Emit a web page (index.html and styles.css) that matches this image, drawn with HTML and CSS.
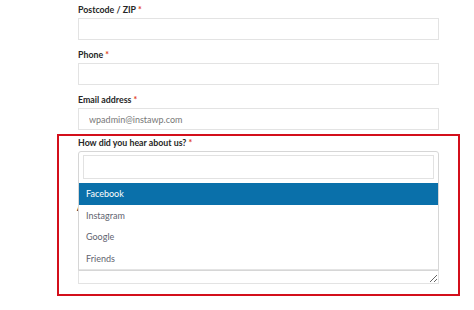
FILE: index.html
```html
<!DOCTYPE html>
<html lang="en">
<head>
    <meta charset="UTF-8">
    <meta name="viewport" content="width=device-width, initial-scale=1.0">
    <title>Checkout</title>
    <link rel="stylesheet" href="styles.css">
</head>
<body>
    <div class="form">
        <div class="field">
            <label>Postcode / ZIP <span class="req">*</span></label>
            <input type="text" class="input">
        </div>
        <div class="field">
            <label>Phone <span class="req">*</span></label>
            <input type="text" class="input">
        </div>
        <div class="field">
            <label>Email address <span class="req">*</span></label>
            <input type="text" class="input" value="wpadmin@instawp.com">
        </div>

        <div class="highlight">
            <label>How did you hear about us? <span class="req">*</span></label>
            <div class="select-wrap">
                <div class="selection"></div>
                <div class="dropdown">
                    <div class="search"><input type="text" class="search-input"></div>
                    <ul class="options">
                        <li class="active">Facebook</li>
                        <li>Instagram</li>
                        <li>Google</li>
                        <li>Friends</li>
                    </ul>
                </div>
            </div>
            <div class="field">
                <label class="under-label">Additional information</label>
                <textarea class="notes"></textarea>
            </div>
        </div>
    </div>
</body>
</html>
```

FILE: styles.css
```css
body {
    margin: 0;
    background: #fff;
    font-family: "Open Sans", "Noto Sans", sans-serif;
}

.form {
    margin-left: 78px;
    width: 361px;
    padding-top: 3px;
}

label {
    display: block;
    font-family: Lato, "Liberation Sans", sans-serif;
    font-weight: 700;
    font-size: 8.8px;
    line-height: 14px;
    color: #262626;
    margin-bottom: 1px;
}

.req {
    color: #e2401c;
}

.field {
    margin-bottom: 8px;
}

.input {
    display: block;
    box-sizing: border-box;
    width: 100%;
    height: 22px;
    margin: 0;
    border: 1px solid #e3e3e3;
    padding: 0 10px;
    font-family: Lato, "Open Sans", sans-serif;
    font-size: 9px;
    color: #777;
    outline: none;
}

.highlight {
    margin: -4px -21px 0;
    padding: 0 19px 10px;
    border: 2px solid #d30f1b;
}

.highlight .field {
    margin-bottom: 0;
}

/* label under the open dropdown, only its first letter peeks out */
.under-label {
    margin-left: -1px;
}

.select-wrap {
    position: relative;
}

.selection {
    height: 50px;
}

.dropdown {
    position: absolute;
    top: 0;
    left: 0;
    right: 0;
    background: #fff;
    border: 1px solid #d6d6d6;
    border-radius: 3px 3px 0 0;
    z-index: 2;
}

.search {
    padding: 3px 4px 4px;
}

.search-input {
    display: block;
    box-sizing: border-box;
    width: 100%;
    height: 24px;
    margin: 0;
    border: 1px solid #e2e2e2;
    outline: none;
}

.options {
    list-style: none;
    margin: 0;
    padding: 0;
    border-bottom: 1px solid #e4e4e4;
}

.options li {
    height: 21.5px;
    line-height: 21px;
    padding-left: 7px;
    font-family: Lato, "Open Sans", sans-serif;
    font-size: 9px;
    color: #5f6470;
}

.options li.active {
    background: #0a70aa;
    color: #fff;
}

.notes {
    display: block;
    box-sizing: border-box;
    width: 100%;
    height: 68px;
    margin: 0;
    border: 1px solid #e3e3e3;
    outline: none;
}
```
